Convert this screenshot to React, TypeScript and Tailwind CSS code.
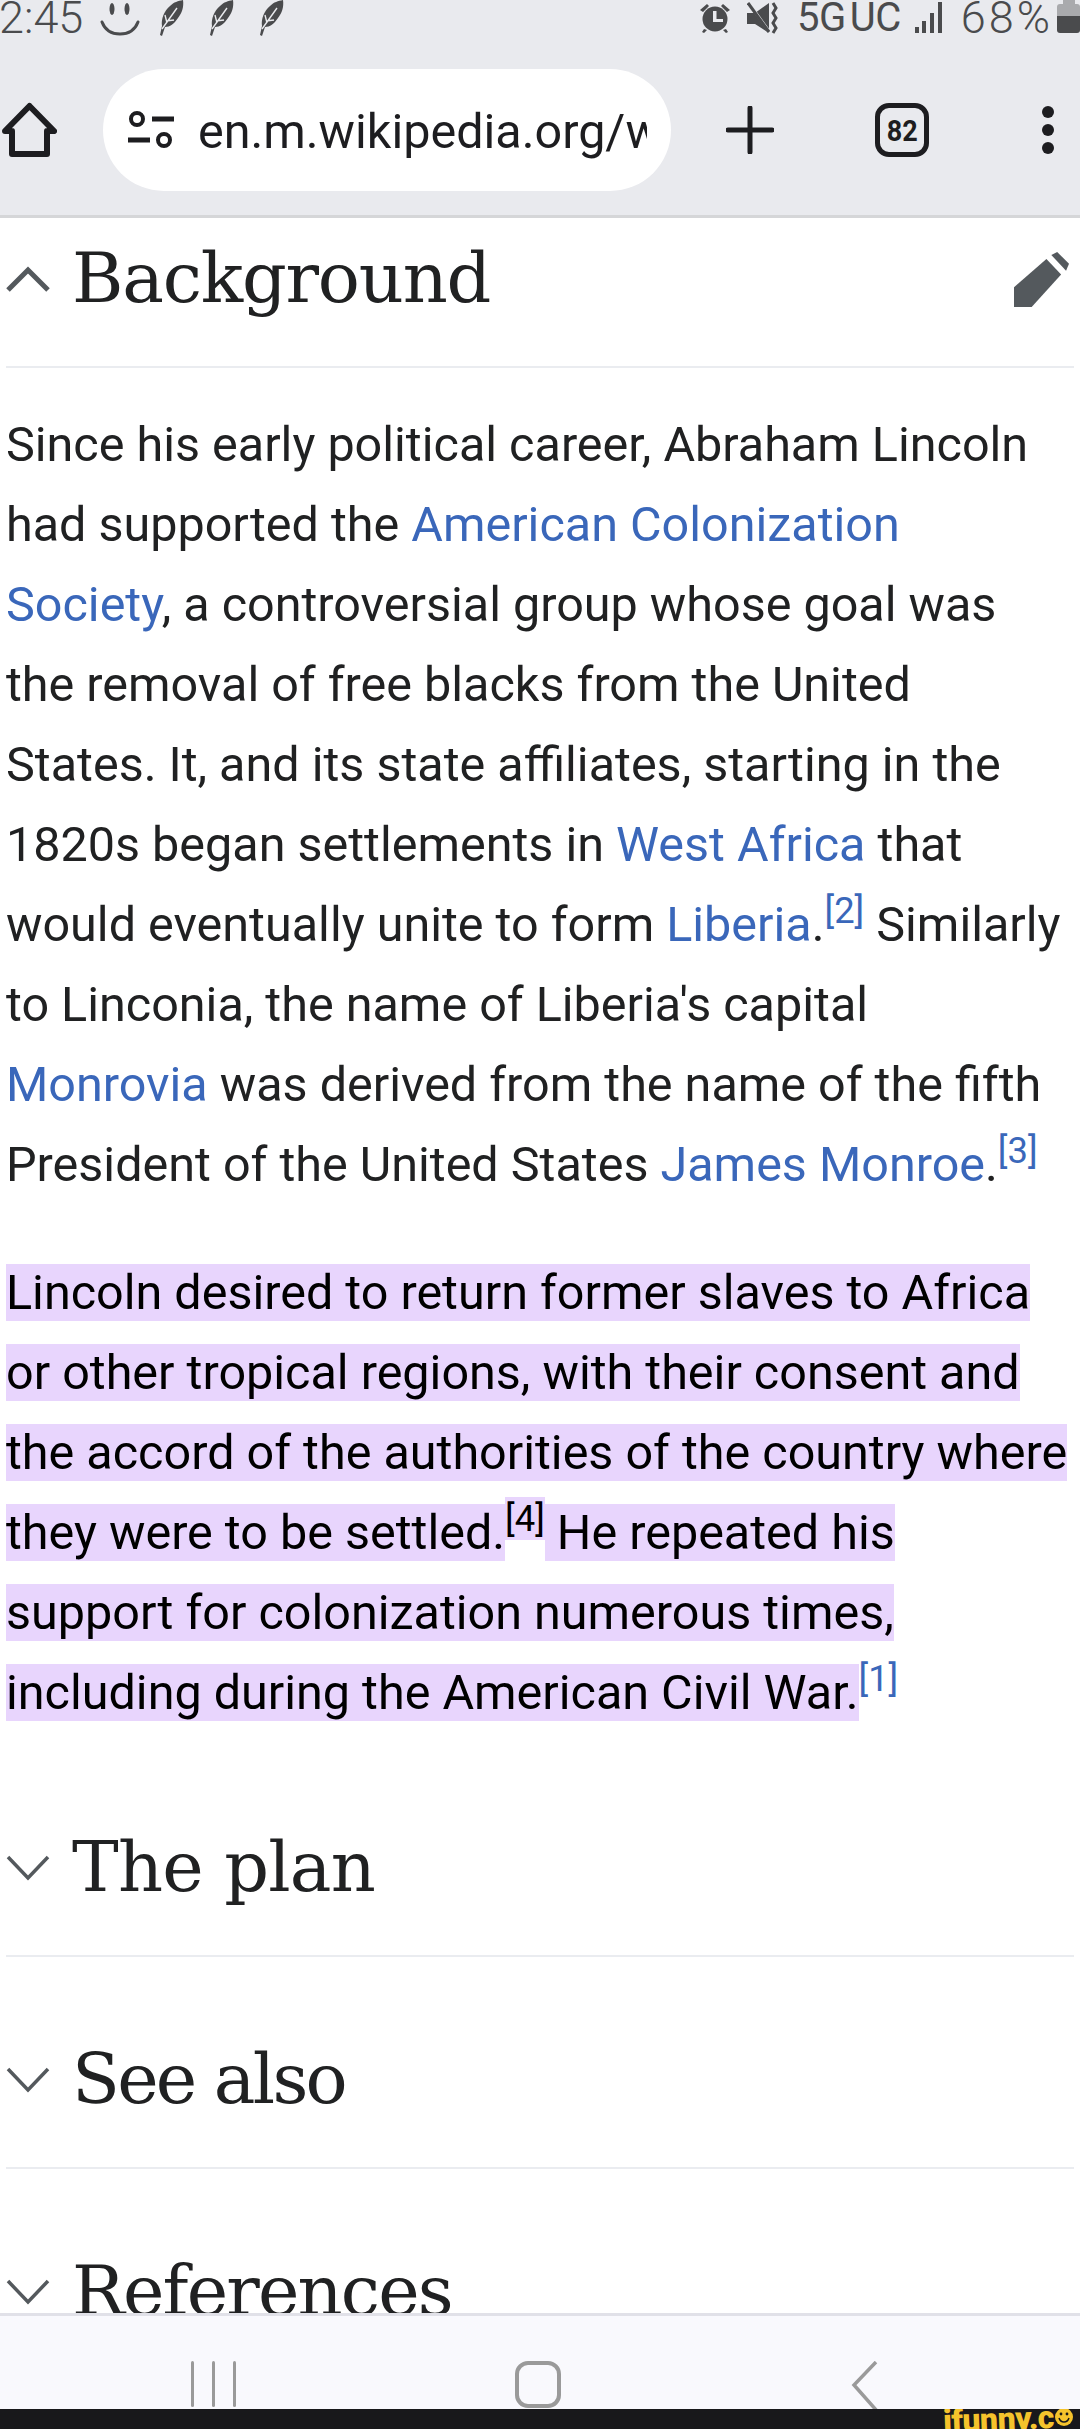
import React from "react";

const ROBOTO = "font-['Roboto',sans-serif]";

function Feather() {
  return (
    <svg width="26" height="36" viewBox="0 0 26 36">
      <path d="M25 0c1 7-1 13-5 18-4 6-8 9-13 9l-3 9-2-1 2-9c-1-7 2-15 8-20 4-4 8-5 13-6z" fill="#4a4b4d" />
      <path d="M4 29 19 8M8 21l8-1M7 15l2 8" stroke="#e9eaee" strokeWidth="1.4" fill="none" />
    </svg>
  );
}

function StatusBar() {
  return (
    <div className="flex h-[35px] items-start justify-between text-[#4a4b4d]">
      <div className="flex items-start">
        <span className={`${ROBOTO} ml-[-1px] text-[45px] leading-[36px] font-light`}>2:45</span>
        <svg className="ml-[17px] mt-[1px]" width="40" height="36" viewBox="0 0 40 36" fill="none">
          <ellipse cx="12" cy="8" rx="2.5" ry="6" fill="#4a4b4d" />
          <ellipse cx="27" cy="8" rx="2.5" ry="6" fill="#4a4b4d" />
          <path d="M2 21c3 8 10 12 18 12s15-4 18-12" stroke="#4a4b4d" strokeWidth="3" strokeLinecap="round" />
        </svg>
        <div className="ml-[18px] flex gap-[24px]">
          <Feather />
          <Feather />
          <Feather />
        </div>
      </div>
      <div className="flex items-start">
        <svg className="mt-[2px]" width="32" height="32" viewBox="0 0 32 32" fill="#4a4b4d">
          <circle cx="16" cy="17" r="12.5" />
          <path d="M1 8 8 2l2 2-6 6zM31 8l-7-6-2 2 6 6zM5 27l-2 3 2 1 3-3zM27 27l2 3-2 1-3-3z" />
          <path d="M14 9h3.5v8H24v3H14z" fill="#e9eaee" />
        </svg>
        <svg className="ml-[16px] mt-[2px]" width="34" height="32" viewBox="0 0 34 32" fill="#4a4b4d">
          <path d="M0 11h8L22 1v30L8 22H0z" />
          <path d="M1 0 24 32" stroke="#e9eaee" strokeWidth="3" />
          <path d="M1 1 22 30" stroke="#4a4b4d" strokeWidth="3" />
          <path d="M26 1l3 5-3 5 3 5-3 5 3 5-3 5" stroke="#4a4b4d" strokeWidth="3" fill="none" />
        </svg>
        <span className={`${ROBOTO} ml-[16px] text-[40px] leading-[36px] tracking-[-0.5px]`}>5G</span>
        <span className={`${ROBOTO} ml-[4px] text-[40px] leading-[36px] tracking-[-0.5px]`}>UC</span>
        <svg className="ml-[14px] mt-[2px]" width="30" height="32" viewBox="0 0 30 32" fill="#4a4b4d">
          <rect x="0" y="25" width="4" height="6" />
          <rect x="7" y="19" width="4" height="12" />
          <rect x="15" y="11" width="4" height="20" />
          <rect x="23" y="0" width="4" height="31" />
        </svg>
        <span className={`${ROBOTO} ml-[16px] text-[45px] leading-[36px] font-light tracking-[3px]`}>68%</span>
        <div className="ml-[4px] flex h-[34px] w-[23px] flex-col items-center">
          <div className="h-[4px] w-[12px] bg-[#a9aaad]" />
          <div className="h-[12px] w-full rounded-t-[3px] bg-[#a9aaad]" />
          <div className="h-[17px] w-full rounded-b-[3px] bg-[#4a4b4d]" />
        </div>
      </div>
    </div>
  );
}

function Toolbar() {
  return (
    <div className="mt-[34px] flex items-center">
      <svg className="ml-[2px]" width="55" height="56" viewBox="0 0 55 56" fill="none" stroke="#1d1d20" strokeWidth="6" strokeLinejoin="round" strokeLinecap="round">
        <path d="M3 29 27.5 4 52 29h-7v23H10V29z" />
      </svg>
      <div className="ml-[46px] flex h-[122px] w-[568px] items-center overflow-hidden rounded-full bg-white pl-[25px]">
        <svg width="46" height="38" viewBox="0 0 46 38" fill="none" stroke="#1d1d20">
          <circle cx="9" cy="8" r="6" strokeWidth="4" />
          <circle cx="36" cy="29" r="6" strokeWidth="4" />
          <path d="M24 8h22M0 29h22" strokeWidth="5" />
        </svg>
        <span className={`${ROBOTO} ml-[24px] mt-[5px] w-[449px] overflow-hidden text-[48.5px] whitespace-nowrap text-[#1d1d20]`}>en.m.wikipedia.org/wiki</span>
      </div>
      <svg className="ml-[55px]" width="48" height="48" viewBox="0 0 48 48" stroke="#1d1d20" strokeWidth="5" strokeLinecap="round">
        <path d="M24 2v44M2 24h44" />
      </svg>
      <div className="ml-[101px] flex h-[54px] w-[54px] items-center justify-center rounded-[14px] border-[5px] border-[#1d1d20]">
        <span className={`${ROBOTO} scale-x-90 text-[30px] font-bold text-[#1d1d20]`}>82</span>
      </div>
      <div className="ml-[113px] flex flex-col gap-[6px]">
        <div className="h-[12px] w-[12px] rounded-full bg-[#1d1d20]" />
        <div className="h-[12px] w-[12px] rounded-full bg-[#1d1d20]" />
        <div className="h-[12px] w-[12px] rounded-full bg-[#1d1d20]" />
      </div>
    </div>
  );
}

function Chevron({ up }: { up?: boolean }) {
  return (
    <svg className="shrink-0" width="44" height="26" viewBox="0 0 44 26" fill="none" stroke="#54595d" strokeWidth={up ? 5 : 3.5}>
      <path d={up ? "M2 24 22 4l20 20" : "M2 2l20 21L42 2"} />
    </svg>
  );
}

function SectionHeading({ title, up, edit, track }: { title: string; up?: boolean; edit?: boolean; track: string }) {
  return (
    <div className="mx-[6px] flex h-[150px] items-center border-b-2 border-[#eaecf0] pb-[27px]">
      <Chevron up={up} />
      <h2 className={`ml-[22px] font-['DejaVu_Serif',serif] text-[70px] leading-[121px] whitespace-nowrap text-[#202122] ${track}`}>{title}</h2>
      {edit && (
        <svg className="ml-auto mr-[5px] mt-[2px]" width="55" height="55" viewBox="0 0 56 56" fill="#54595d">
          <path d="M0 56V36L33 7l15 16-30 33z" />
          <path d="M38 3l6-3 12 12-3 7z" />
        </svg>
      )}
    </div>
  );
}

function Ref({ n }: { n: number }) {
  return <sup className="text-[36.4px] text-[#3a67ba]">[{n}]</sup>;
}

function Link({ children }: { children: React.ReactNode }) {
  return <span className="text-[#3a67ba]">{children}</span>;
}

function Mark({ children }: { children: React.ReactNode }) {
  return <span className="bg-[#e8d5fd] box-decoration-clone">{children}</span>;
}

export default function App() {
  return (
    <div className="flex h-[2429px] w-[1080px] flex-col overflow-hidden bg-white">
      <header className="h-[218px] shrink-0 border-b-[3px] border-[#d5d6d8] bg-[#e9eaee]">
        <StatusBar />
        <Toolbar />
      </header>
      <main className="min-h-0 flex-1 overflow-hidden">
        <SectionHeading title="Background" up edit track="tracking-[-1.2px]" />
        <div className={`${ROBOTO} mt-[37px] px-[6px] text-[48.5px] leading-[80px] whitespace-nowrap text-[#202122]`}>
          <p>
            Since his early political career, Abraham Lincoln<br />
            had supported the <Link>American Colonization</Link><br />
            <Link>Society</Link>, a controversial group whose goal was<br />
            the removal of free blacks from the United<br />
            States. It, and its state affiliates, starting in the<br />
            1820s began settlements in <Link>West Africa</Link> that<br />
            would eventually unite to form <Link>Liberia</Link>.<Ref n={2} /> Similarly<br />
            to Linconia, the name of Liberia's capital<br />
            <Link>Monrovia</Link> was derived from the name of the fifth<br />
            President of the United States <Link>James Monroe</Link>.<Ref n={3} />
          </p>
          <p className="mt-[48px] text-black">
            <Mark>Lincoln desired to return former slaves to Africa</Mark><br />
            <Mark>or other tropical regions, with their consent and</Mark><br />
            <Mark>the accord of the authorities of the country where</Mark><br />
            <Mark>they were to be settled.</Mark><sup className="bg-[#e8d5fd] text-[36.4px]">[4]</sup><Mark> He repeated his</Mark><br />
            <Mark>support for colonization numerous times,</Mark><br />
            <Mark>including during the American Civil War.</Mark><Ref n={1} />
          </p>
        </div>
        <div className="mt-[74px] flex flex-col gap-[62px]">
          <SectionHeading title="The plan" track="tracking-[-0.8px]" />
          <SectionHeading title="See also" track="tracking-[-2.8px]" />
          <SectionHeading title="References" track="tracking-[-1.8px]" />
        </div>
      </main>
      <nav className="flex h-[96px] shrink-0 items-start overflow-hidden border-t-[3px] border-[#e1e1e8] bg-[#f9f9fd] pt-[45px]">
        <div className="ml-[191px] flex gap-[18px]">
          <div className="h-[46px] w-[3px] rounded-full bg-[#9a9a9a]" />
          <div className="h-[46px] w-[3px] rounded-full bg-[#9a9a9a]" />
          <div className="h-[46px] w-[3px] rounded-full bg-[#9a9a9a]" />
        </div>
        <div className="ml-[279px] h-[47px] w-[46px] rounded-[13px] border-[4px] border-[#9a9a9a]" />
        <svg className="ml-[290px]" width="28" height="50" viewBox="0 0 28 50" fill="none" stroke="#9a9a9a" strokeWidth="3.5">
          <path d="M25 1 3 24l23 26" />
        </svg>
      </nav>
      <footer className="flex h-[20px] shrink-0 items-start justify-end overflow-hidden bg-[#18181b] pr-[7px]">
        <span className={`${ROBOTO} mt-[-6px] -rotate-2 text-[32px] leading-[32px] font-black tracking-[-0.5px] text-[#f5c32c]`}>ifunny.c</span>
        <svg className="ml-[1px] mt-[-1px]" width="18" height="18" viewBox="0 0 18 18">
          <circle cx="9" cy="9" r="9" fill="#f5c32c" />
          <circle cx="6" cy="6" r="1.4" fill="#18181b" />
          <circle cx="12" cy="6" r="1.4" fill="#18181b" />
          <path d="M4 10c1 3 3 4 5 4s4-1 5-4" stroke="#18181b" strokeWidth="1.5" fill="none" />
        </svg>
      </footer>
    </div>
  );
}
